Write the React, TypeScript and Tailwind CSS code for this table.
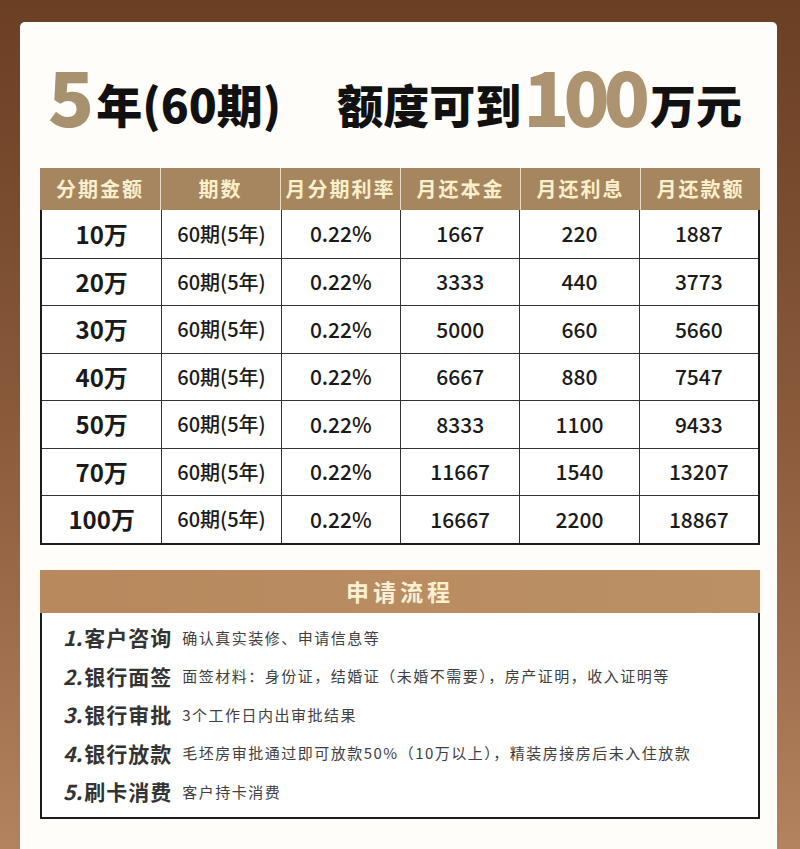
const rows = [
  ["10万", "1667", "220", "1887"],
  ["20万", "3333", "440", "3773"],
  ["30万", "5000", "660", "5660"],
  ["40万", "6667", "880", "7547"],
  ["50万", "8333", "1100", "9433"],
  ["70万", "11667", "1540", "13207"],
  ["100万", "16667", "2200", "18867"],
];

const heads = ["分期金额", "期数", "月分期利率", "月还本金", "月还利息", "月还款额"];

const steps = [
  ["1.", "客户咨询", "确认真实装修、申请信息等"],
  ["2.", "银行面签", "面签材料：身份证，结婚证（未婚不需要），房产证明，收入证明等"],
  ["3.", "银行审批", "3个工作日内出审批结果"],
  ["4.", "银行放款", "毛坯房审批通过即可放款50%（10万以上），精装房接房后未入住放款"],
  ["5.", "刷卡消费", "客户持卡消费"],
];

const font = { fontFamily: '"Noto Sans CJK SC", "Noto Sans", sans-serif' };

export default function App() {
  return (
    <div
      className="h-[849px] w-[800px] overflow-hidden bg-gradient-to-b from-[#6a3f24] via-[#8a5a3b] to-[#b3835f] pl-[20px] pr-[23px] pt-[22px]"
      style={font}
    >
      <div className="h-[840px] rounded-t-[5px] bg-[#fffdfa] pt-[10px]">
        {/* title */}
        <div className="flex h-[100px] items-end pl-[28px] text-[#111] font-black">
          <span className="text-[76px] leading-none text-[#a8916f] tracking-[-2px]">5</span>
          <span className="ml-[4px] text-[46px] leading-none pb-[6px]">年(60期)</span>
          <span className="ml-[56px] text-[46px] leading-none pb-[6px]">额度可到</span>
          <span className="ml-[2px] text-[76px] leading-none text-[#ad9370] tracking-[-6px]">100</span>
          <span className="ml-[6px] text-[46px] leading-none pb-[6px]">万元</span>
        </div>

        {/* table */}
        <div className="ml-[20px] mt-[36px] w-[720px]">
          <div className="grid h-[42px] grid-cols-6 bg-[#a6865f]">
            {heads.map((h, i) => (
              <div
                key={h}
                className={`flex items-center justify-center text-[20px] font-bold tracking-[2px] text-[#fcefcc] ${i > 0 ? "border-l border-[#e8d9c2]" : ""}`}
              >
                {h}
              </div>
            ))}
          </div>
          <div className="border-2 border-t-0 border-[#1c1c1c] bg-white">
            {rows.map((r, idx) => (
              <div
                key={r[0]}
                className={`grid h-[47.5px] grid-cols-6 text-[#1a1a1a] ${idx > 0 ? "border-t border-[#333]" : ""}`}
              >
                <div className="flex items-center justify-center text-[24px] font-bold">{r[0]}</div>
                <div className="flex items-center justify-center border-l border-[#333] text-[20px] font-medium">60期(5年)</div>
                <div className="flex items-center justify-center border-l border-[#333] text-[21px] font-medium">0.22%</div>
                <div className="flex items-center justify-center border-l border-[#333] text-[21px] font-medium">{r[1]}</div>
                <div className="flex items-center justify-center border-l border-[#333] text-[21px] font-medium">{r[2]}</div>
                <div className="flex items-center justify-center border-l border-[#333] text-[21px] font-medium">{r[3]}</div>
              </div>
            ))}
          </div>
        </div>

        {/* process */}
        <div className="ml-[20px] mt-[25px] w-[720px]">
          <div className="flex h-[43px] items-center justify-center bg-gradient-to-r from-[#b7895d] to-[#bb9065] text-[23px] font-bold tracking-[4px] text-[#fdf0d2]">
            申请流程
          </div>
          <div className="flex h-[206px] flex-col border-2 border-t-0 border-[#1c1c1c] bg-white pl-[21px] pt-[6px]">
            {steps.map((s) => (
              <div key={s[0]} className="flex h-[38.5px] items-center">
                <span className="text-[21px] font-bold italic text-[#333]">{s[0]}</span>
                <span className="ml-[2px] text-[21px] font-bold tracking-[1px] text-[#333]">{s[1]}</span>
                <span className="ml-[10px] text-[15px] tracking-[1.5px] text-[#404040]">{s[2]}</span>
              </div>
            ))}
          </div>
        </div>
      </div>
    </div>
  );
}
